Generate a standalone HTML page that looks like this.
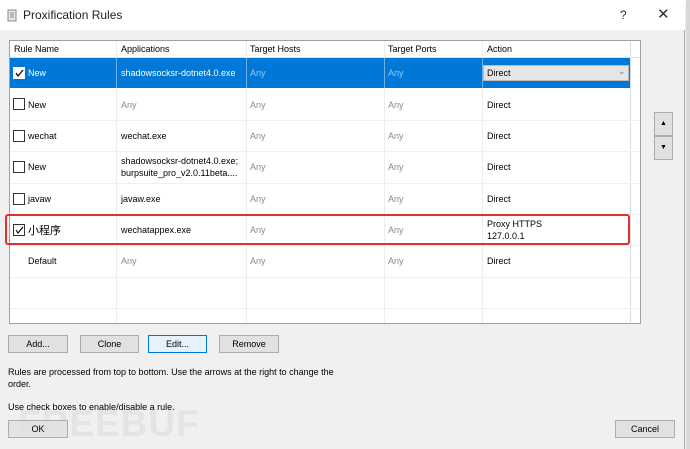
<!DOCTYPE html>
<html><head><meta charset="utf-8"><style>
*{margin:0;padding:0;box-sizing:border-box}
body{width:690px;height:449px;overflow:hidden;background:#f0f0f0;font-family:"Liberation Sans","Noto Sans CJK SC",sans-serif;font-size:9px;color:#000;position:relative}
.a{position:absolute}
.btn{position:absolute;background:#e1e1e1;border:1px solid #adadad;text-align:center;line-height:16px;font-size:9px}
.cb{position:absolute;width:12px;height:12px;border:1px solid #333;background:#fff}
.t{position:absolute;font-size:9px;white-space:nowrap}
.g{color:#8a8a8a}
.vl{position:absolute;top:41px;width:1px;height:282px;background:#ececec}
.hl{position:absolute;left:10px;width:630px;height:1px;background:#efefef}
</style></head><body>
<div class="a" style="left:0;top:0;width:690px;height:4px;background:#fff"></div>
<div class="a" style="left:686px;top:0;width:4px;height:449px;background:#d8d8d8"></div>
<div class="a" style="left:0;top:3px;width:685px;height:446px;background:#f0f0f0;border-right:1px solid #aaa"></div>
<div class="a" style="left:0;top:3px;width:685px;height:27px;background:#fff"></div>
<svg class="a" style="left:7px;top:9px" width="11" height="14" viewBox="0 0 11 14"><rect x="1" y="1" width="8" height="11" fill="#e8e8e0" stroke="#888"/><path d="M3 4h4M3 6h4M3 8h4" stroke="#888"/></svg>
<div class="t" style="left:23px;top:8px;font-size:12px;color:#222">Proxification Rules</div>
<div class="t" style="left:620px;top:8px;font-size:12px;color:#333">?</div>
<div class="t" style="left:657px;top:5px;font-size:15px;color:#333">✕</div>

<div class="t" style="left:18px;top:403px;font-size:37px;font-weight:bold;color:#e4e4e4;letter-spacing:1px">FREEBUF</div>

<div class="a" style="left:9px;top:40px;width:632px;height:284px;background:#fff;border:1px solid #a0a0a0"></div>
<div class="a" style="left:10px;top:57px;width:620px;height:31px;background:#0078d7"></div>
<div class="vl" style="left:116px"></div><div class="vl" style="left:246px"></div><div class="vl" style="left:384px"></div><div class="vl" style="left:482px"></div><div class="vl" style="left:630px;background:#ddd"></div>
<div class="a" style="left:116px;top:57px;width:1px;height:31px;background:#6ab0ee"></div>
<div class="a" style="left:246px;top:57px;width:1px;height:31px;background:#6ab0ee"></div>
<div class="a" style="left:384px;top:57px;width:1px;height:31px;background:#6ab0ee"></div>
<div class="a" style="left:482px;top:57px;width:1px;height:31px;background:#6ab0ee"></div>
<div class="hl" style="top:57px;background:#e0e0e0"></div>
<div class="hl" style="top:120px"></div><div class="hl" style="top:151px"></div><div class="hl" style="top:183px"></div><div class="hl" style="top:214px"></div><div class="hl" style="top:245px"></div><div class="hl" style="top:277px"></div><div class="hl" style="top:308px"></div>

<div class="t" style="left:14px;top:44px">Rule Name</div>
<div class="t" style="left:121px;top:44px">Applications</div>
<div class="t" style="left:250px;top:44px">Target Hosts</div>
<div class="t" style="left:388px;top:44px">Target Ports</div>
<div class="t" style="left:487px;top:44px">Action</div>

<div class="cb" style="left:13px;top:67px;border-color:#fff"></div>
<svg class="a" style="left:13px;top:67px" width="12" height="12"><path d="M3 6l2 3 5-6" stroke="#000" stroke-width="1.2" fill="none"/></svg>
<div class="t" style="left:28px;top:68px;color:#fff">New</div>
<div class="t" style="left:121px;top:68px;color:#fff">shadowsocksr-dotnet4.0.exe</div>
<div class="t" style="left:250px;top:68px;color:#9cc8f0">Any</div>
<div class="t" style="left:388px;top:68px;color:#9cc8f0">Any</div>
<div class="a" style="left:483px;top:65px;width:146px;height:16px;background:#e5e5e5;border:1px solid #bbb"></div>
<div class="t" style="left:487px;top:68px">Direct</div>
<div class="t" style="left:618px;top:66px;color:#777">⌄</div>

<div class="cb" style="left:13px;top:98px"></div><div class="t" style="left:28px;top:100px">New</div>
<div class="t g" style="left:121px;top:100px">Any</div><div class="t g" style="left:250px;top:100px">Any</div><div class="t g" style="left:388px;top:100px">Any</div><div class="t" style="left:487px;top:100px">Direct</div>

<div class="cb" style="left:13px;top:130px"></div><div class="t" style="left:28px;top:131px">wechat</div>
<div class="t" style="left:121px;top:131px">wechat.exe</div><div class="t g" style="left:250px;top:131px">Any</div><div class="t g" style="left:388px;top:131px">Any</div><div class="t" style="left:487px;top:131px">Direct</div>

<div class="cb" style="left:13px;top:161px"></div><div class="t" style="left:28px;top:162px">New</div>
<div class="t" style="left:121px;top:156px">shadowsocksr-dotnet4.0.exe;</div><div class="t" style="left:121px;top:168px">burpsuite_pro_v2.0.11beta....</div>
<div class="t g" style="left:250px;top:162px">Any</div><div class="t g" style="left:388px;top:162px">Any</div><div class="t" style="left:487px;top:162px">Direct</div>

<div class="cb" style="left:13px;top:193px"></div><div class="t" style="left:28px;top:194px">javaw</div>
<div class="t" style="left:121px;top:194px">javaw.exe</div><div class="t g" style="left:250px;top:194px">Any</div><div class="t g" style="left:388px;top:194px">Any</div><div class="t" style="left:487px;top:194px">Direct</div>

<div class="cb" style="left:13px;top:224px"></div>
<svg class="a" style="left:13px;top:224px" width="12" height="12"><path d="M3 6l2 3 5-6" stroke="#000" stroke-width="1.1" fill="none"/></svg>
<div class="t" style="left:28px;top:222px;font-size:11px">小程序</div>
<div class="t" style="left:121px;top:225px">wechatappex.exe</div><div class="t g" style="left:250px;top:225px">Any</div><div class="t g" style="left:388px;top:225px">Any</div>
<div class="t" style="left:487px;top:219px">Proxy HTTPS</div><div class="t" style="left:487px;top:231px">127.0.0.1</div>
<div class="a" style="left:5px;top:214px;width:625px;height:31px;border:2px solid #e03030;border-radius:3px"></div>

<div class="t" style="left:28px;top:256px">Default</div>
<div class="t g" style="left:121px;top:256px">Any</div><div class="t g" style="left:250px;top:256px">Any</div><div class="t g" style="left:388px;top:256px">Any</div><div class="t" style="left:487px;top:256px">Direct</div>

<div class="btn" style="left:654px;top:112px;width:19px;height:24px;line-height:22px;font-size:7px">▲</div>
<div class="btn" style="left:654px;top:136px;width:19px;height:24px;line-height:22px;font-size:7px">▼</div>

<div class="btn" style="left:8px;top:335px;width:60px;height:18px">Add...</div>
<div class="btn" style="left:80px;top:335px;width:59px;height:18px">Clone</div>
<div class="btn" style="left:148px;top:335px;width:59px;height:18px;background:#e5f1fb;border:1px solid #0078d7">Edit...</div>
<div class="btn" style="left:219px;top:335px;width:60px;height:18px">Remove</div>

<div class="t" style="left:8px;top:367px">Rules are processed from top to bottom. Use the arrows at the right to change the</div>
<div class="t" style="left:8px;top:379px">order.</div>
<div class="t" style="left:8px;top:402px">Use check boxes to enable/disable a rule.</div>

<div class="btn" style="left:8px;top:420px;width:60px;height:18px;background:rgba(225,225,225,0.85)">OK</div>
<div class="btn" style="left:615px;top:420px;width:60px;height:18px">Cancel</div>
</body></html>
